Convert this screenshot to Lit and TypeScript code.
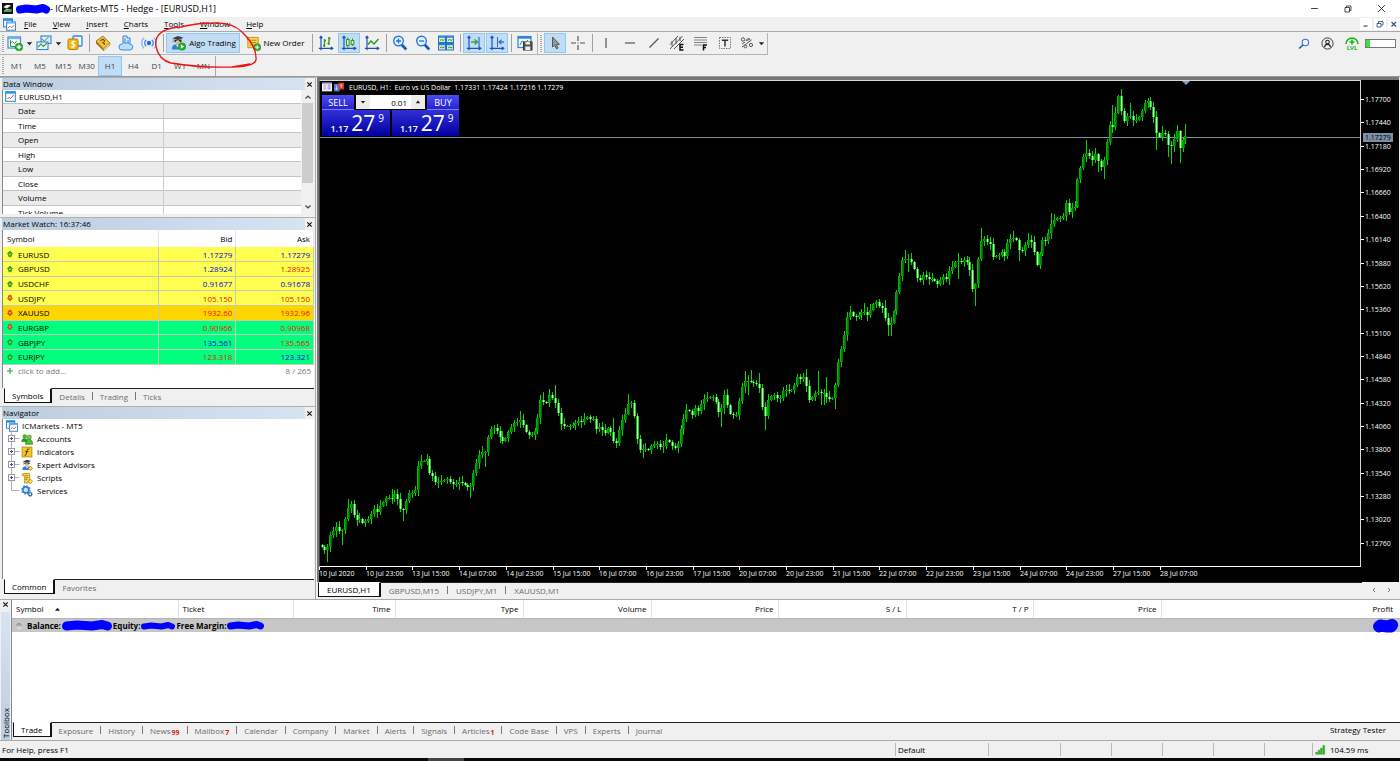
import { LitElement, html, svg, css } from "lit";
import { customElement, property, state } from "lit/decorators.js";
import { classMap } from "lit/directives/class-map.js";

/* ---------- icons ---------- */

const plusBadge = svg`<circle cx="12" cy="12" r="3.8" fill="#2fae2b" stroke="#0c7d12" stroke-width=".6"/><path d="M12 9.8v4.4M9.8 12h4.4" stroke="#fff" stroke-width="1.3"/>`;
const axes = svg`<path d="M3 1.5v11.8h11.5M1.6 3.2L3 1.2l1.4 2M12.8 11.9l2 1.4-2 1.4M.8 13.3H3v2" fill="none" stroke="#1c50c4" stroke-width="1.2"/>`;
const gradCap = svg`<path d="M2.5 3.2L8 1l5.500 1.800L8 5.200z" fill="#3a3f46"/><path d="M4.500 4.500v2.300q3.500 1.800 7 0V4.300L8 5.700z" fill="#23272d"/><circle cx="7.800" cy="7.600" r="2.200" fill="#e6b98a"/><path d="M1.800 14.600q0-5.200 4.600-5l3.800.2q3 .8 3 4.800z" fill="#2f7fd2"/><path d="M6 9.800l2 2.600 2-2.400" fill="#fff"/><path d="M3.200 3.600v4" stroke="#b8860b" stroke-width=".8"/>`;

const ICONS: Record<string, unknown> = {
  app: svg`<rect width="16" height="16" fill="#111"/><path d="M2 6Q8 0 13 4L7 8z" fill="#eee"/><path d="M2 13l5-4 3 2 4-3v5z" fill="#4da24a"/><path d="M3 12q3-4 9-2" stroke="#fff" fill="none"/>`,
  mdi: svg`<rect x=".7" y="1" width="11" height="10" fill="#fff" stroke="#1680dc" stroke-width="1.2"/><path d="M.5 2.4h11.5" stroke="#1680dc" stroke-width="2"/><rect x="4.5" y="5" width="11" height="10" fill="#fff" stroke="#1680dc" stroke-width="1.2"/><path d="M4.5 6h11" stroke="#5fb4f2" stroke-width="1.6"/><path d="M6 12.5l2.5-2.5 2 2 3-3" fill="none" stroke="#e2522c" stroke-width="1.2"/>`,
  chart: svg`<rect x="1" y="1" width="14" height="14" fill="#fff" stroke="#1680dc" stroke-width="1.4"/><path d="M1 2.4h14" stroke="#2b96ec" stroke-width="3"/><path d="M3.5 11.5L6 9l2 2 4.500-5" fill="none" stroke="#d8402a" stroke-width="1.4"/>`,
  newchart: svg`<rect x="1" y="2" width="12.500" height="11" fill="#fff" stroke="#3987cf" stroke-width="1.2"/><path d="M1 3.2h12.500" stroke="#6cb1ea" stroke-width="2"/><path d="M3.500 5v6.500h8M3.500 8l2-1.500 2 2L10 5.600" fill="none" stroke="#2f9e44" stroke-width="1"/>${plusBadge}`,
  profiles: svg`<rect x="5" y="1" width="10" height="7.500" fill="#d9ecfb" stroke="#2f86cf" stroke-width="1.1"/><path d="M5.500 4l3 2 4-4" stroke="#2f9e44" fill="none"/><rect x="1" y="7" width="11" height="7.500" fill="#eef7ff" stroke="#2f86cf" stroke-width="1.1"/><path d="M2 12l3-3 2.500 2.500L11 8" stroke="#2f9e44" stroke-width="1.200" fill="none"/>`,
  symbols: svg`<rect x="6" y="1" width="9" height="10" rx="1" fill="#eaf5ff" stroke="#2f86cf" stroke-width="1.3"/><rect x="1" y="4" width="10" height="10.500" rx="1.500" fill="#f2b81f" stroke="#b57d06"/><path d="M8 6.800Q6 5.600 5 7t1.300 2.200T7.600 11 4 11.800M6.200 5.400v8" fill="none" stroke="#fff7d0" stroke-width="1.100"/>`,
  book: svg`<path d="M1 6l7-5 7 7-6.500 6z" fill="#f0bf3c" stroke="#9a6b09" stroke-width=".8"/><path d="M1 6v2.500L8.500 16v-2z" fill="#a8730d"/><path d="M8.500 14v2L15 10V8z" fill="#fff3c8" stroke="#9a6b09" stroke-width=".6"/><path d="M5.500 6q2-2.500 3.500-1T8 7.500l2 2" fill="none" stroke="#7b4e00" stroke-width="1.200"/>`,
  cloud: svg`<path d="M5 1h4v2h3v7H5z" fill="#d6ebff" stroke="#2c82dd" stroke-width="1"/><path d="M7 3v6M10 5v4" stroke="#2c82dd"/><path d="M4 15a3 3 0 010-6q1.500-2.500 4-.8 2-1.200 3.500.8a3 3 0 01.5 6z" fill="#b9dcff" stroke="#3a8de0" stroke-width="1"/>`,
  radio: svg`<circle cx="8" cy="8" r="2.200" fill="#1f6fd6"/><path d="M5.200 4.700a4.500 4.500 0 000 6.600M10.800 4.700a4.500 4.500 0 010 6.600" fill="none" stroke="#3c86e0" stroke-width="1.300"/><path d="M3 2.600a7.500 7.500 0 000 10.800M13 2.600a7.500 7.500 0 010 10.800" fill="none" stroke="#7eb2ee" stroke-width="1.300"/>`,
  algo: svg`${gradCap}<circle cx="12" cy="11.500" r="4" fill="#27a527"/><path d="M10.800 9.300l3.400 2.200-3.400 2.200z" fill="#fff"/>`,
  order: svg`<path d="M2 1.500h11v11H2z" fill="#fbd75b" stroke="#c29312"/><path d="M2 1.500q-1.500 1 0 3M4 4.500h7M4 7h7M4 9.500h5" fill="none" stroke="#a97b07"/>${plusBadge}`,
  bars: svg`${axes}<path d="M6.500 4v8M5 10.500h1.500M6.500 5.500H8M11 2v8M9.500 8.500H11M11 3.500h1.600" stroke="#2c9a1e" stroke-width="1.400"/>`,
  candles: svg`${axes}<path d="M6.800 2.500v10M11.500 3.500v7.500" stroke="#2c9a1e"/><rect x="5.500" y="4.500" width="2.600" height="6" fill="#d9f5cc" stroke="#2c9a1e"/><rect x="10.200" y="5.500" width="2.600" height="4" fill="#d9f5cc" stroke="#2c9a1e"/>`,
  line: svg`${axes}<path d="M4 9.500l3-3.500 3 3 4.500-5" fill="none" stroke="#2c9a1e" stroke-width="1.400"/>`,
  zoomin: svg`<path d="M9.500 9.500l4.800 5" stroke="#1b57b8" stroke-width="2.600"/><circle cx="6.500" cy="6" r="4.800" fill="#e3f2ff" stroke="#2a7ad8" stroke-width="1.400"/><path d="M6.500 3.500v5M4 6h5" stroke="#2a6fd0" stroke-width="1.300"/>`,
  zoomout: svg`<path d="M9.500 9.500l4.800 5" stroke="#1b57b8" stroke-width="2.600"/><circle cx="6.500" cy="6" r="4.800" fill="#e3f2ff" stroke="#2a7ad8" stroke-width="1.400"/><path d="M4 6h5" stroke="#2a6fd0" stroke-width="1.300"/>`,
  tile: svg`<path d="M.5 1h7v6.500h-7zM8.500 1h7v6.500h-7zM.5 8.500h7V15h-7zM8.500 8.500h7V15h-7z" fill="#d8f0d0" stroke="#2a6fc8" stroke-width="1.100"/><path d="M.5 2h7M8.500 2h7M.5 9.500h7M8.500 9.500h7" stroke="#2a7fd8" stroke-width="1.500"/><path d="M2 5.500l1.500-1L5 5.500l1.500-1M10 5.500l1.500-1 1.500 1 1.500-1M2 13l1.500-1L5 13l1.500-1M10 13l1.500-1 1.500 1 1.500-1" fill="none" stroke="#2c8a1e"/>`,
  autoscroll: svg`${axes}<path d="M13 2v10" stroke="#1c50c4"/><path d="M5 7h6M8.500 4.500L11.500 7l-3 2.500" fill="none" stroke="#35a828" stroke-width="1.400"/>`,
  shift: svg`${axes}<path d="M8.500 2v10" stroke="#4a6a90"/><path d="M15 7h-4.500M12.500 4.800L10 7l2.500 2.200" fill="none" stroke="#2b78d8" stroke-width="1.300"/>`,
  template: svg`<rect x="1" y="1.500" width="13" height="11" fill="#e8f4ff" stroke="#2f86cf" stroke-width="1.200"/><path d="M1 2.700h13" stroke="#2f86cf" stroke-width="2"/><path d="M3 10l2-4 3 2 3-3" fill="none" stroke="#2f9e44"/><rect x="6.500" y="7" width="8.500" height="8" fill="#555" stroke="#333"/><path d="M8.500 7h4.500v2.500H8.500zM8.300 11.500h5V15h-5z" fill="#eee"/>`,
  cursor: svg`<path d="M5.500 2v10l2.300-2 1.600 3.800 1.600-.7-1.600-3.600 3-.2z" fill="#999" stroke="#555" stroke-width="1"/>`,
  cross: svg`<path d="M8 1v5M8 10v5M1 8h5M10 8h5M7.500 8h1" stroke="#555" stroke-width="1.200"/>`,
  vline: svg`<path d="M8 3v10" stroke="#555" stroke-width="1.200"/>`,
  hline: svg`<path d="M3 8h10" stroke="#555" stroke-width="1.200"/>`,
  tline: svg`<path d="M3.500 12.500l9-9" stroke="#555" stroke-width="1.200"/>`,
  channel: svg`<path d="M1 9.500L9 1M1 14L13.500 1M5 14L15 4M3 6v5M7 3v6M11 2v4" stroke="#555" fill="none"/><path d="M14.500 9.500H11V15h3.500M11 12.200h3" stroke="#111" stroke-width="1.500" fill="none"/>`,
  fibo: svg`<path d="M1 2.500h13M1 5h13M1 7.500h13M1 10h8" stroke="#777" stroke-width=".9"/><path d="M14 10h-3.500v5.500M10.500 12.500H13" stroke="#111" stroke-width="1.500" fill="none"/>`,
  text: svg`<rect x="2.500" y="2.500" width="11" height="11" fill="none" stroke="#777" stroke-dasharray="1.500 1"/><path d="M4.800 5.300h6.400M8 5v6.500" stroke="#333" stroke-width="1.500"/>`,
  objects: svg`<circle cx="4" cy="4.500" r="1.700" fill="none" stroke="#555"/><path d="M7 5.500l2.500-2.500 1.500 1.500zM3 12L12.500 5M3 9l3-2" fill="none" stroke="#555"/><circle cx="6.500" cy="11.500" r="1.400" fill="none" stroke="#555"/><circle cx="12" cy="10" r="1.600" fill="none" stroke="#555"/>`,
  find: svg`<path d="M7 9l-5.500 5" stroke="#2458c4" stroke-width="2.200"/><circle cx="9.800" cy="6" r="4.300" fill="#eef5ff" stroke="#3a72d8" stroke-width="1.400"/>`,
  user: svg`<circle cx="8" cy="8" r="6.900" fill="none" stroke="#333" stroke-width="1.200"/><circle cx="8" cy="6.200" r="2.200" fill="none" stroke="#222" stroke-width="1.300"/><path d="M4.500 12.500q0-3.500 3.500-3.500t3.500 3.500" fill="none" stroke="#222" stroke-width="1.400"/>`,
  accounts: svg`<circle cx="5" cy="4.500" r="3" fill="#46b52c"/><path d="M.5 12q0-5.500 4.500-5t4.500 5z" fill="#2f9a1d"/><circle cx="11" cy="5.500" r="2.700" fill="#8fce5a" stroke="#33641c" stroke-width=".8"/><path d="M6 15q0-6.500 4.800-6.500T15.500 15z" fill="#4cc42f" stroke="#1e6d10" stroke-width=".8"/>`,
  indicator: svg`<rect x="1.500" y="1.500" width="13" height="13" fill="#f8c91c" stroke="#b88908" stroke-width="1.200"/><path d="M11 4q-2.500-1-3 2l-1 5q-.5 2-2.200 1.300M5.500 7.500h4.500" fill="none" stroke="#333" stroke-width="1.200"/>`,
  expert: svg`${gradCap}<path d="M12.500 9.500l3 3-3 3-3-3z" fill="#ffd840" stroke="#a37a00" stroke-width=".9"/>`,
  script: svg`<path d="M2.500 2h9v10h2v2.500h-9V5H1.500z" fill="#f8d34a" stroke="#b08410"/><path d="M5.500 5h4.500M5.500 7.500h4.500M5.500 10h3" stroke="#a37a00"/><path d="M12.500 9.500l3 3-3 3-3-3z" fill="#ffe060" stroke="#a37a00" stroke-width=".9"/>`,
  gears: svg`<circle cx="6.500" cy="6.500" r="4" fill="#cfe4fb" stroke="#2f7bd6" stroke-width="2.200"/><circle cx="6.500" cy="6.500" r="5.600" fill="none" stroke="#2f7bd6" stroke-width="1.400" stroke-dasharray="2.200 2.200"/><circle cx="12.300" cy="12.300" r="2" fill="#fff" stroke="#1f64b8" stroke-width="1.400"/><circle cx="12.300" cy="12.300" r="3" fill="none" stroke="#1f64b8" stroke-width="1" stroke-dasharray="1.300 1.100"/>`,
  up: svg`<path d="M8 2l5.500 5.500H11v5L8 14l-3-1.500v-5H2.500z" fill="#35a71f" stroke="#1c7d10"/><circle cx="8" cy="8.500" r="1.500" fill="#d8f5a8"/>`,
  down: svg`<path d="M8 14l5.500-5.500H11v-5L8 2 5 3.500v5H2.500z" fill="#e8502c" stroke="#c03010"/><circle cx="8" cy="7.500" r="1.500" fill="#ffd6b0"/>`,
  plus: svg`<path d="M8 2v12M2 8h12" stroke="#2fae2b" stroke-width="2.400"/>`,
  depth: svg`<rect width="16" height="14" y="1" fill="#f3f3ff"/><path d="M0 2h16" stroke="#88a" stroke-width="1.500"/><path d="M2 5h5M2 8h5M2 11h5" stroke="#d88" stroke-width="1.500"/><path d="M9 5h5M9 8h5M9 11h5" stroke="#77d" stroke-width="1.500"/>`,
  trade: svg`<rect x="0" y="3" width="9" height="12" fill="#4f7fd8"/><rect x="7" y="1" width="9" height="11" fill="#d83a2c"/><path d="M4 6v6M2.500 10L4 12l1.500-2M11.500 10V4M10 6l1.500-2L13 6" stroke="#fff" fill="none"/>`,
  close: svg`<path d="M3 3l10 10M13 3L3 13" stroke="#111" stroke-width="2.600"/>`,
  winmin: svg`<path d="M2 8h12" stroke="#222" stroke-width="1.500"/>`,
  winmax: svg`<path d="M2 5h9v9H2zM5 5V2h9v9h-3" fill="none" stroke="#222" stroke-width="1.600"/>`,
  winclose: svg`<path d="M2 2l12 12M14 2L2 14" stroke="#222" stroke-width="1.600"/>`,
  submin: svg`<path d="M3 12h8" stroke="#3a5580" stroke-width="2.500"/>`,
  subclose: svg`<path d="M3 4l9 9M12 4l-9 9" stroke="#3a5580" stroke-width="2.600"/>`,
  submax: svg`<path d="M2 7h8v7H2zM5 7V3h9v7h-4" fill="none" stroke="#3a5580" stroke-width="1.800"/>`,
  chevup: svg`<path d="M3 11l5-5 5 5" fill="none" stroke="#444" stroke-width="2.400"/>`,
  chevdown: svg`<path d="M3 5l5 5 5-5" fill="none" stroke="#444" stroke-width="2.400"/>`,
  chevleft: svg`<path d="M10 4L6 8l4 4" fill="none" stroke="#777" stroke-width="2"/>`,
  chevright: svg`<path d="M6 4l4 4-4 4" fill="none" stroke="#777" stroke-width="2"/>`,
  caret: svg`<path d="M2 5h12l-6 7z" fill="#222"/>`,
  caretup: svg`<path d="M2 11h12L8 4z" fill="#222"/>`,
  signal: svg`<path d="M1 15v-3h2.500v3zM4.500 15v-6H7v6zM8 15V6h2.500v9zM11.500 15V2H14v13z" fill="#38b52c" stroke="#1f8a17" stroke-width=".6"/>`,
};

const icon = (name: string, size = 16) =>
  html`<svg class="icon" width=${size} height=${size} viewBox="0 0 16 16" aria-hidden="true">${ICONS[name]}</svg>`;

const shared = css`
  * { box-sizing: border-box; }
  button, input, select { font: inherit; color: inherit; margin: 0; padding: 0; border: 0; border-radius: 0; background: none; }
  table { border-collapse: collapse; border-spacing: 0; width: 100%; table-layout: fixed; }
  th { font-weight: normal; }
  th, td { padding: 0; text-align: left; }
  .icon { display: block; flex: none; }
`;

/* ---------- tab strip ---------- */

interface Tab { name: string; count?: string }

@customElement("tab-strip")
class TabStrip extends LitElement {
  @property({ attribute: false }) tabs: Tab[] = [];
  @state() private active = 0;

  static styles = [shared, css`
    :host { display: flex; align-items: flex-start; height: 15px; min-width: 0; }
    .tab { height: 15px; line-height: 13px; padding: 0 var(--tab-pad, 7px); color: #6b6b6b; border-top: 1px solid #222; white-space: nowrap; flex: none; display: flex; align-items: center; }
    .tab.on { color: #000; background: #fff; border: 1px solid #111; border-top-color: #fff; border-width: 1px 2px 1px 1px; }
    .sep { flex: none; width: 1px; height: 15px; border-top: 1px solid #222; background: linear-gradient(#777, #777) center 3px / 1px 8px no-repeat; }
    .count { color: #e01414; font-size: 7px; font-weight: bold; line-height: 8px; align-self: flex-end; padding-left: 1px; }
    .fill { flex: 1; border-top: 1px solid #222; height: 1px; }
  `];

  render() {
    return html`
      ${this.tabs.map((t, i) => html`
        ${i > 0 && i - 1 !== this.active && i !== this.active ? html`<span class="sep"></span>` : ""}
        <button class=${classMap({ tab: true, on: i === this.active })} @click=${() => (this.active = i)}>
          ${t.name}${t.count ? html`<span class="count">${t.count}</span>` : ""}
        </button>`)}
      <span class="fill"></span>`;
  }
}

/* ---------- price chart ---------- */

/* Close level of the series at chosen points: x, y on the plot. */
const PATH = `320.5,547 323,548 326,553 328.5,540 331,534 334,529 337,527 340,533 343,528 346,514 349,503 352,506 355,523 358,516 361,523 364,522 367,520
370,517 373,507 376,513 379,508 382,504 384,498 388,497 390,502 393,495 396,494 399,504 402,514 405,504 408,495 411,491 414,498 416.600,473 419,460 422,462
425,461 427,459 430,475 433,477 436,483 440,482 443,480 447,479 449,481 453,485 456,484 460,480 463,486 466,483 469,493 472,477 475,467 478,457 481,450 484,457
487,440 489,432 492,427 495,428 498,435 501,438 504,442 507,433 510,430 513,423 516,422 519,420 522,422 525,432 528,435 531,435 534,432 536.600,427 539,402 542,398
545,408 548,395 551,396 553,400 556,406 559,417 562,427 566,426 571,427 576,422 583,421 586,417 593,419 595,429 599,427 605,433 609,426 612,437 615,448 618,437
621,419 623,422 626,410 629,402 632,403 635,423 637.500,447 640,450 643,449 649,449 655,443 661,448 667,439 670,443 673,449 676,448 679,440 682,418 685,419
687,406 690,412 693,415 696,405 699,413 702,400 705,398 714,396 717,409 720,416 722.500,400 725,393 728.500,411 731,416 737,414 740,393 743,383 746,380 751,382
757,384 760,390 763.500,417 766,415 769,393 772,397 775,395 778,400 781,395 784,389 790,393 795,383 798,375 801,380 804,377 807,390 810,405 813,393 819,393 824,392
827,398 830,399 833,398 836.500,377 839,353 842,348 845,327 848,312 851,312 854,318 857,317 860,313 865,312 868,315 871,308 874,302 877,303 880,307 883,307 886,325
889,325 892,322 895,302 898,281 900.500,272 903,255 906,261 909,258 912,263 915,272 918,281 921,280 924,272 927,279 933,279 936,284 939,283 942,275 945,282 948,272
950.500,270 953,264 956,260 959,263 965,260 968,263 971,277 974,303 976.500,265 979,257 982,234 985,241 990,244 993,258 998,255 1002,252 1005,257 1008,240 1013,237
1016,240 1020,252 1023,251 1027,238 1031,243 1034,253 1037,267 1040,252 1043,237 1046,242 1049,230 1052,222 1058,216 1061,220 1063,215 1066,203 1069,213 1072,207
1075,207 1078,172 1081,168 1084,153 1087,152 1090,158 1093,160 1096,152 1099,166 1102,167 1104.500,157 1107,139 1110,123 1113,128 1116,109 1119,93 1122,117 1125,123
1128,113 1131,117 1134,122 1137,118 1140,118 1143,105 1146,101 1149,102 1152,112 1154.500,122 1157.500,140 1160,135 1163,132 1166,135 1169,152 1172,143 1175,135
1178,129 1180.500,158 1183.500,132 1186.500,138`
  .split(/\s+/).map((p) => p.split(",").map(Number));

/* Long wicks: x, reached level. */
const SPIKES = `328,562 343,545 349,499 393,489 402,521 427,454 469,498 484,467 519,411 542,392 548,389 556,385 612,418 629,394 643,458 720,427 746,371 751,370 748,395 760,373
766,430 778,402 807,369 819,371 822,405 824,405 827,377 836,409 865,303 889,336 886,300 892,336 906,250 909,272 959,253 959,279 974,306 982,228 1013,231 1020,261 1027,233
1052,213 1087,140 1099,172 1104,179 1113,105 1122,89 1131,103 1149,97 1157,150 1163,126 1169,157 1172,164 1180,163 1186,124 1186,144`
  .split(/\s+/).map((p) => p.split(",").map(Number));

const STEP = 46.7 / 16;
const X0 = 321.5;

interface Candle { x: number; open: number; close: number; high: number; low: number }

function buildCandles(): Candle[] {
  const out: Candle[] = [];
  let k = 0;
  let prev = 545;
  for (let i = 0; i < 297; i++) {
    const x = X0 + i * STEP;
    while (k < PATH.length - 2 && PATH[k + 1][0] < x) k++;
    const [xa, ya] = PATH[k];
    const [xb, yb] = PATH[k + 1];
    const t = Math.min(1, Math.max(0, (x - xa) / (xb - xa)));
    const close = Math.round(ya + (yb - ya) * t + (((i * 37) % 5) - 2) * 0.3);
    const top = Math.min(prev, close);
    const bottom = Math.max(prev, close);
    out.push({ x: Math.round(x), open: prev, close, high: Math.round(top - 1 - ((i * 29) % 7) * 0.8), low: Math.round(bottom + 1 + ((i * 53) % 7) * 0.8) });
    prev = close;
  }
  for (const [x, y] of SPIKES) {
    const c = out[Math.min(out.length - 1, Math.round((x - X0) / STEP))];
    c.high = Math.min(c.high, y);
    c.low = Math.max(c.low, y);
  }
  return out;
}

const CANDLES = buildCandles();
const PRICES = Array.from({ length: 20 }, (_, i) => (1.177 - i * 0.0026).toFixed(5));
const TIMES = ["10 Jul 2020", "10 Jul 23:00", "13 Jul 15:00", "14 Jul 07:00", "14 Jul 23:00", "15 Jul 15:00", "16 Jul 07:00", "16 Jul 23:00", "17 Jul 15:00",
  "20 Jul 07:00", "20 Jul 23:00", "21 Jul 15:00", "22 Jul 07:00", "22 Jul 23:00", "23 Jul 15:00", "24 Jul 07:00", "24 Jul 23:00", "27 Jul 15:00", "28 Jul 07:00"];

@customElement("price-chart")
class PriceChart extends LitElement {
  static styles = [shared, css`
    :host { display: grid; grid-template: minmax(0, 1fr) 15px / minmax(0, 1fr) 37px; background: #000; color: #fff; position: relative; overflow: hidden;
      border: 1px solid #777; border-width: 2px 0 0 2px; font: 7px/9px "Open Sans", sans-serif; padding-right: 1px; }
    .plot { border: 1px solid #d8d8d8; border-left-color: #444; border-bottom-color: #fff; position: relative; }
    .plot svg, .times svg { display: block; width: 100%; height: 100%; }
    .prices { display: flex; flex-direction: column; justify-content: space-between; padding: 15px 0 19px; position: relative; }
    .price { display: flex; align-items: center; gap: 1px; }
    .price::before { content: ""; width: 3px; height: 1px; background: #fff; }
    .now { position: absolute; left: 2px; top: 53px; right: 5px; background: #7a8ea6; color: #000; padding-left: 2px; line-height: 9px; }
    .times { grid-column: 1 / -1; }
    .head { position: absolute; left: 3px; top: 2px; display: flex; align-items: center; gap: 2px; height: 10px; white-space: pre; }
    .head span { margin-left: 3px; }
    .deal { position: absolute; left: 3px; top: 15px; width: 137px; display: grid; grid-template-columns: 32px 1fr 32px; background: #000; }
    .side { background: linear-gradient(#4c4cf4, #2323d2); height: 15px; font-size: 9px; line-height: 15px; border-bottom: 1px solid #7d7dff; color: #fff; }
    .volume { display: grid; grid-template-columns: 14px 1fr 14px; height: 14px; margin: 0 2px; background: #fff; color: #000; }
    .volume input { min-width: 0; width: 100%; height: 14px; text-align: right; font-size: 8px; padding-right: 4px; }
    .volume button { background: #ececec; display: grid; place-items: center; }
    .quotes { grid-column: 1 / -1; display: grid; grid-template-columns: 1fr 1fr; gap: 2px; }
    .quote { height: 26px; background: linear-gradient(#3030d8, #0000a0); color: #fff; display: flex; align-items: flex-end; justify-content: center; gap: 3px; padding-left: 3px; }
    .small { font-size: 9px; font-weight: 600; line-height: 15px; }
    .big { font-size: 21px; line-height: 25px; }
    .sup { font-size: 10px; line-height: 16px; align-self: flex-start; }
  `];

  private candle(c: Candle) {
    const up = c.close <= c.open;
    const top = Math.min(c.open, c.close);
    const h = Math.max(1, Math.abs(c.close - c.open));
    return svg`<rect x=${c.x} y=${c.high} width="1" height=${c.low - c.high} fill="#00d800"/>
      <rect x=${c.x - 1} y=${top} width="1" height=${h} fill="#00b400"/>
      <rect x=${c.x} y=${top} width="1" height=${h} fill=${up ? "#009000" : "#b4ffb4"}/>
      <rect x=${c.x + 1} y=${top} width="1" height=${h} fill=${up ? "#006c00" : "#3cb83c"}/>`;
  }

  render() {
    return html`
      <div class="plot">
        <svg role="img" aria-label="EURUSD H1 candles">
          <g transform="translate(-320 -81)">
            <rect x="320" y="137" width="100%" height="1" fill="#7f8fa0"/>
            <g shape-rendering="crispEdges">${CANDLES.map((c) => this.candle(c))}</g>
            <path d="M1182 81h8l-2 2-2 2-2-2z" fill="#8aa0b8"/>
          </g>
        </svg>
      </div>
      <div class="prices">
        ${PRICES.map((p) => html`<div class="price">${p}</div>`)}
        <div class="now">1.17279</div>
      </div>
      <div class="times">
        <svg>${TIMES.map((t, i) => svg`<rect x=${Math.round(i * 46.7)} y="0" width="1" height="3" fill="#fff"/>
          <text x=${Math.round(i * 46.7)} y="9" fill="#fff">${t}</text>`)}</svg>
      </div>
      <div class="head">${icon("depth", 10)}${icon("trade", 10)}<span>EURUSD, H1:  Euro vs US Dollar  1.17331 1.17424 1.17216 1.17279</span></div>
      <div class="deal">
        <button class="side">SELL</button>
        <div class="volume">
          <button aria-label="Less">${icon("caret", 6)}</button>
          <input aria-label="Volume" value="0.01">
          <button aria-label="More">${icon("caretup", 6)}</button>
        </div>
        <button class="side">BUY</button>
        <div class="quotes">
          ${[0, 1].map(() => html`<button class="quote"><span class="small">1.17</span><span class="big">27</span><span class="sup">9</span></button>`)}
        </div>
      </div>`;
  }
}

/* ---------- application ---------- */

const QUOTES = [
  { name: "EURUSD", dir: "up", bid: "1.17279", ask: "1.17279", b: "blue", a: "blue", bg: "yellow" },
  { name: "GBPUSD", dir: "up", bid: "1.28924", ask: "1.28925", b: "blue", a: "red", bg: "yellow" },
  { name: "USDCHF", dir: "up", bid: "0.91677", ask: "0.91678", b: "blue", a: "blue", bg: "yellow" },
  { name: "USDJPY", dir: "down", bid: "105.150", ask: "105.150", b: "red", a: "red", bg: "yellow" },
  { name: "XAUUSD", dir: "down", bid: "1932.60", ask: "1932.96", b: "red", a: "red", bg: "gold" },
  { name: "EURGBP", dir: "down", bid: "0.90966", ask: "0.90968", b: "red", a: "red", bg: "green" },
  { name: "GBPJPY", dir: "up", bid: "135.561", ask: "135.565", b: "blue", a: "red", bg: "green" },
  { name: "EURJPY", dir: "up", bid: "123.318", ask: "123.321", b: "red", a: "blue", bg: "green" },
];

const tabs = (...names: string[]): Tab[] => names.map((n) => { const [name, count] = n.split("#"); return { name, count }; });

@customElement("app-root")
class AppRoot extends LitElement {
  @state() private period = "H1";

  private marketTabs = tabs("Symbols", "Details", "Trading", "Ticks");
  private navTabs = tabs("Common", "Favorites");
  private chartTabs = tabs("EURUSD,H1", "GBPUSD,M15", "USDJPY,M1", "XAUUSD,M1");
  private toolTabs = tabs("Trade", "Exposure", "History", "News#99", "Mailbox#7", "Calendar", "Company", "Market", "Alerts", "Signals", "Articles#1", "Code Base", "VPS", "Experts", "Journal");

  static styles = [shared, css`
    :host { display: flex; flex-direction: column; height: 100vh; min-height: 560px; overflow: hidden; position: relative; background: #f0f0f0; color: #000; font: 8px/12px "Open Sans", sans-serif; }
    .title { display: flex; align-items: center; gap: 3px; height: 17px; padding: 0 14px 0 2px; background: #fff; font-size: 9px; }
    .title .name { margin-left: -3px; }
    .winbtns { margin-left: auto; display: flex; gap: 25px; align-items: center; }
    .scrawl { display: block; flex: none; overflow: visible; }
    .menu { display: flex; align-items: center; height: 15px; padding-left: 3px; gap: 8px; border-bottom: 1px solid #a8a8a8; }
    .menu nav { display: flex; gap: 16px; }
    .menu a { color: inherit; text-decoration: none; }
    .menu u { text-underline-offset: 1px; }
    .mdi { margin-left: auto; display: flex; gap: 2px; }
    .mdi button { width: 12px; height: 12px; background: #fff; display: grid; place-items: center; }
    .bar { display: flex; align-items: center; height: 23px; }
    .tools { display: flex; align-items: center; gap: 1px; height: 22px; padding: 0 1px 0 2px; border: 1px solid #b4b4b4; border-width: 0 1px 1px 0; }
    .grip { width: 2px; height: 17px; background: repeating-linear-gradient(#aaa 0 1px, transparent 1px 2px); margin-right: 1px; }
    .tools button { width: 22px; height: 20px; display: flex; align-items: center; justify-content: center; border: 1px solid transparent; flex: none; }
    .tools .on { background: #c0ddf5; border-color: #90c8f4; }
    .tools .drop { width: 28px; gap: 3px; }
    .tools .wide { width: auto; padding: 0 1px; gap: 3px; }
    .tools .algo { width: 74px; }
    .tools .order { width: 68px; }
    .sep { width: 1px; height: 18px; background: #a0a0a0; margin: 0 1px 0 2px; }
    .draw { display: flex; justify-content: space-between; width: 171px; }
    .right { margin-left: auto; display: flex; align-items: center; gap: 11px; padding-right: 4px; }
    .lvl { margin-right: -5px; }
    .meter { width: 31px; height: 9px; border: 1px solid #777; background: linear-gradient(90deg, #3be43b 4px, #fff 4px); }
    .periods { display: flex; align-items: center; height: 22px; padding-left: 2px; border-bottom: 1px solid #999; }
    .set { display: grid; grid-template-columns: repeat(9, 1fr); width: 211px; border-right: 1px solid #aaa; height: 20px; }
    .set button { color: #444; border: 1px solid transparent; }
    .set .on { background: #c0ddf5; border-color: #90c8f4; }
    .main { display: grid; grid-template-columns: 316px minmax(0, 1fr); gap: 1px; flex: 1; min-height: 0; padding-right: 1px; }
    .left { display: flex; flex-direction: column; min-height: 0; border-right: 1px solid #aaa; gap: 2px; }
    .panel { display: flex; flex-direction: column; min-height: 0; padding: 0 1px 0 2px; border-top: 1px solid #b0b0b0; }
    .cap { display: flex; align-items: center; justify-content: space-between; height: 12px; line-height: 12px; padding-left: 1px; flex: none; background: linear-gradient(90deg, #bccddf, #d7e4f2); }
    .cap button { width: 9px; height: 12px; background: #f0f0f0; display: grid; place-items: center; }
    .body { background: #fff; flex: 1; min-height: 0; overflow: hidden; border-left: 1px solid #888; }
    .datawin { height: 138px; flex: none; padding-bottom: 1px; }
    .data { display: flex; }
    .data .grid { flex: 1; min-width: 0; }
    .sym { display: flex; align-items: center; gap: 3px; height: 13px; padding-left: 2px; }
    .values { height: 116px; }
    .values td { border-top: 1px solid #c4c4c4; padding-left: 15px; line-height: 13px; }
    .values td + td { border-left: 1px solid #ccc; padding: 0; }
    .values .shade { background: #ebebeb; }
    .vname { width: 54%; }
    .scroll { width: 13px; background: #f0f0f0; display: flex; flex-direction: column; align-items: center; padding: 3px 1px; }
    .thumb { width: 11px; height: 80px; background: #cdcdcd; margin: 2px 0 auto; }
    .market { height: 187px; flex: none; padding-bottom: 1px; }
    .quotes th { height: 17px; padding-left: 4px; border-right: 1px solid #e4e4e4; }
    .quotes .num { text-align: right; padding-right: 3px; }
    .quotes td { height: 14px; line-height: 13px; }
    .quotes tbody { height: 117px; }
    .quotes tbody td { border: 1px solid #c8c8b4; border-width: 0 1px 1px 0; }
    .nm { display: flex; align-items: center; gap: 4px; padding-left: 3px; }
    .half { width: 50%; } .quarter { width: 25%; }
    .yellow { background: #ffff50; }
    .gold { background: #ffd500; }
    .green { background: #00ff7f; }
    .blue { color: #0000e6; }
    .red { color: #f01400; }
    .add { display: flex; align-items: center; justify-content: space-between; color: #777; padding-right: 3px; height: 13px; }
    .navi { flex: 1; padding-bottom: 5px; }
    .market tab-strip, .navi tab-strip { margin-left: 2px; }
    .tree { list-style: none; margin: 0; padding: 0 0 0 3px; }
    .tree li { display: flex; align-items: center; gap: 4px; height: 13px; }
    .twig { width: 14px; height: 13px; margin-right: -5px; }
    .leaf { padding-left: 2px; }
    .chartcol { display: flex; flex-direction: column; min-width: 0; min-height: 0; border-top: 1px solid #777; }
    price-chart { flex: 1; min-height: 0; }
    .charttabs { display: flex; padding: 0 6px 2px 1px; align-items: center; --tab-pad: 8px; }
    .charttabs tab-strip { flex: 1; }
    .arrows { display: flex; gap: 7px; padding-left: 8px; }
    .toolbox { display: grid; grid-template-columns: 11px minmax(0, 1fr); height: 142px; flex: none; border-top: 1px solid #aaa; border-bottom: 1px solid #aaa; }
    .spine { display: flex; flex-direction: column; align-items: center; justify-content: space-between; padding-top: 1px; }
    .spine div { flex: 1; margin-top: 4px; width: 9px; background: linear-gradient(#bccddf, #d7e4f2); writing-mode: vertical-rl; transform: rotate(180deg); line-height: 9px; padding-top: 2px; }
    .trade { display: flex; flex-direction: column; min-width: 0; background: #fff; border-left: 1px solid #888; }
    .trade th { height: 18px; border-right: 1px solid #e2e2e2; padding: 0 4px; }
    .trade th.r { text-align: right; }
    .trade th:last-child { border: 0; padding-right: 7px; }
    .trade th .icon { display: inline-block; margin-left: 8px; vertical-align: -1px; }
    .trade table { flex: none; }
    .wsym { width: 166px; } .wtick { width: 115px; } .wtime { width: 102px; } .wcol { width: 128px; } .wpr { width: 127px; }
    .sum { display: flex; align-items: center; height: 14px; background: #c6c6c6; border-top: 1px solid #b4b4b4; font-weight: bold; padding: 0 3px 0 4px; white-space: nowrap; gap: 1px; }
    .dot { width: 6px; height: 6px; border-radius: 3px; background: linear-gradient(#888, #eee); margin-right: 4px; }
    .sum .last { margin-left: auto; }
    .gap { flex: 1; }
    .foot { display: flex; background: #f0f0f0; padding: 0 0 3px 1px; }
    .foot tab-strip { flex: 1; }
    .tester { border-top: 1px solid #222; padding: 0 14px 0 7px; height: 15px; line-height: 13px; }
    .status { display: flex; align-items: center; height: 17px; flex: none; }
    .status div { border-right: 1px solid #b8b8b8; height: 13px; line-height: 13px; padding-left: 2px; display: flex; align-items: center; gap: 4px; }
    .help { flex: 1; }
    .s1 { width: 93px; } .s2 { width: 72px; } .s3 { width: 51px; } .s4 { width: 48px; }
    .status .ms { width: 87px; border: 0; }
    .edge { height: 3px; background: #08080e; flex: none; display: flex; }
    .edge i { margin-left: 428px; width: 36px; background: #444; }
    .ring { position: absolute; left: 150px; top: 18px; pointer-events: none; }
  `];

  private tool(name: string, label: string, cls = "") {
    return html`<button class=${cls} title=${label} aria-label=${label}>${icon(name, 16)}${cls.includes("drop") ? icon("caret", 7) : ""}</button>`;
  }

  private scrawl(w: number, h = 8) {
    const m = h / 2;
    return html`<svg class="scrawl" width=${w} height=${h}><path d="M${m} ${m + 0.5}L${w * 0.3} ${m - 0.5} ${w * 0.6} ${m + 0.5} ${w * 0.8} ${m - 1} ${w - m} ${m + 0.5}" fill="none" stroke="#0000ff" stroke-width=${h} stroke-linecap="round" stroke-linejoin="round"/></svg>`;
  }

  private caption(text: string) {
    return html`<div class="cap"><span>${text}</span><button aria-label="Close ${text}">${icon("close", 7)}</button></div>`;
  }

  private branch(iconName: string, label: string, last = false) {
    return html`<li class="leaf">
      <svg class="twig" viewBox="0 0 14 13" aria-hidden="true">
        <path d=${last ? "M3.5 0v6.500h8" : "M3.500 0v13M7 6.500h4.500"} fill="none" stroke="#b0b0b0"/>
        ${last ? "" : svg`<rect x=".5" y="3.500" width="6" height="6" fill="#fff" stroke="#999"/><path d="M2 6.500h3M3.500 5v3" stroke="#3a50a0"/>`}
      </svg>
      ${icon(iconName, 12)}<span>${label}</span></li>`;
  }

  render() {
    const menu = ["File", "View", "Insert", "Charts", "Tools", "Window", "Help"];
    return html`
      <header class="title">
        ${icon("app", 11)}${this.scrawl(34, 8)}
        <span class="name">- ICMarkets-MT5 - Hedge - [EURUSD,H1]</span>
        <div class="winbtns">
          <button aria-label="Minimize">${icon("winmin", 9)}</button>
          <button aria-label="Restore">${icon("winmax", 8)}</button>
          <button aria-label="Close">${icon("winclose", 9)}</button>
        </div>
      </header>
      <div class="menu">
        ${icon("mdi", 13)}
        <nav>${menu.map((m) => html`<a href="#"><u>${m[0]}</u>${m.slice(1)}</a>`)}</nav>
        <div class="mdi">
          <button aria-label="Minimize chart">${icon("submin", 8)}</button>
          <button aria-label="Restore chart">${icon("submax", 8)}</button>
          <button aria-label="Close chart">${icon("subclose", 8)}</button>
        </div>
      </div>
      <div class="bar">
        <div class="tools">
          <span class="grip"></span>
          ${this.tool("newchart", "New chart", "drop")}${this.tool("profiles", "Profiles", "drop")}${this.tool("symbols", "Symbols")}
          <span class="sep"></span>
          ${this.tool("book", "MetaEditor")}${this.tool("cloud", "Cloud")}${this.tool("radio", "Signals")}
          <span class="sep"></span>
          <button class="wide algo on">${icon("algo", 16)}Algo Trading</button>
          <button class="wide order">${icon("order", 15)}New Order</button>
          <span class="sep"></span>
          ${this.tool("bars", "Bar chart")}${this.tool("candles", "Candlesticks", "on")}${this.tool("line", "Line chart")}
          <span class="sep"></span>
          ${this.tool("zoomin", "Zoom in")}${this.tool("zoomout", "Zoom out")}${this.tool("tile", "Tile windows")}
          <span class="sep"></span>
          ${this.tool("autoscroll", "Auto scroll", "on")}${this.tool("shift", "Chart shift", "on")}
          <span class="sep"></span>
          ${this.tool("template", "Templates")}
        </div>
        <div class="tools">
          <span class="grip"></span>
          ${this.tool("cursor", "Cursor", "on")}${this.tool("cross", "Crosshair")}
          <span class="sep"></span>
          <div class="draw">
            ${this.tool("vline", "Vertical line")}${this.tool("hline", "Horizontal line")}${this.tool("tline", "Trendline")}
            ${this.tool("channel", "Channel")}${this.tool("fibo", "Fibonacci")}${this.tool("text", "Text")}${this.tool("objects", "Objects", "drop")}
          </div>
        </div>
        <div class="right">
          <button aria-label="Search">${icon("find", 12)}</button>
          <button aria-label="Account">${icon("user", 13)}</button>
          <div class="lvl">
            <svg class="icon" width="14" height="18" viewBox="0 0 14 18" role="img" aria-label="Level">
              <path d="M1 9a6 6 0 0112 0M7 4.500v5M4.500 7h5" fill="none" stroke="#19b519" stroke-width="1.600"/>
              <text x="7" y="15" text-anchor="middle" font-size="6" font-weight="bold" fill="#19b519">LVL</text>
            </svg>
          </div>
          <div class="meter"></div>
        </div>
      </div>
      <div class="periods">
        <span class="grip"></span>
        <div class="set">
          ${["M1", "M5", "M15", "M30", "H1", "H4", "D1", "W1", "MN"].map((p) => html`
            <button class=${classMap({ on: p === this.period })} @click=${() => (this.period = p)}>${p}</button>`)}
        </div>
      </div>
      <main class="main">
        <div class="left">
          <section class="panel datawin">
            ${this.caption("Data Window")}
            <div class="body data">
              <div class="grid">
                <div class="sym">${icon("chart", 11)}EURUSD,H1</div>
                <table class="values">
                  <colgroup><col class="vname"><col></colgroup>
                  ${["Date", "Time", "Open", "High", "Low", "Close", "Volume", "Tick Volume"].map((r, i) => html`<tr class=${classMap({ shade: i % 2 === 0 })}><td>${r}</td><td></td></tr>`)}
                </table>
              </div>
              <div class="scroll">${icon("chevup", 8)}<span class="thumb"></span>${icon("chevdown", 8)}</div>
            </div>
          </section>
          <section class="panel market">
            ${this.caption("Market Watch: 16:37:46")}
            <div class="body">
              <table class="quotes">
                <colgroup><col class="half"><col class="quarter"><col class="quarter"></colgroup>
                <thead><tr><th>Symbol</th><th class="num">Bid</th><th class="num">Ask</th></tr></thead>
                <tbody>
                  ${QUOTES.map((q) => html`<tr class=${q.bg}>
                    <td><div class="nm">${icon(q.dir, 8)}${q.name}</div></td>
                    <td class="num ${q.b}">${q.bid}</td><td class="num ${q.a}">${q.ask}</td></tr>`)}
                </tbody>
              </table>
              <div class="add"><span class="nm">${icon("plus", 8)}click to add...</span><span>8 / 265</span></div>
            </div>
            <tab-strip .tabs=${this.marketTabs}></tab-strip>
          </section>
          <section class="panel navi">
            ${this.caption("Navigator")}
            <div class="body">
              <ul class="tree">
                <li>${icon("mdi", 12)}<span>ICMarkets - MT5</span></li>
                ${this.branch("accounts", "Accounts")}${this.branch("indicator", "Indicators")}${this.branch("expert", "Expert Advisors")}
                ${this.branch("script", "Scripts")}${this.branch("gears", "Services", true)}
              </ul>
            </div>
            <tab-strip .tabs=${this.navTabs}></tab-strip>
          </section>
        </div>
        <section class="chartcol">
          <price-chart></price-chart>
          <div class="charttabs">
            <tab-strip .tabs=${this.chartTabs}></tab-strip>
            <div class="arrows"><button aria-label="Previous">${icon("chevleft", 8)}</button><button aria-label="Next">${icon("chevright", 8)}</button></div>
          </div>
        </section>
      </main>
      <section class="toolbox">
        <div class="spine"><button aria-label="Close Toolbox">${icon("close", 7)}</button><div>Toolbox</div></div>
        <div class="trade">
          <table>
            <colgroup><col class="wsym"><col class="wtick"><col class="wtime"><col class="wcol"><col class="wcol"><col class="wpr"><col class="wcol"><col class="wpr"><col class="wcol"><col></colgroup>
            <tr><th>Symbol ${icon("caretup", 7)}</th><th>Ticket</th>${["Time", "Type", "Volume", "Price", "S / L", "T / P", "Price", "Profit"].map((h) => html`<th class="r">${h}</th>`)}</tr>
          </table>
          <div class="sum"><span class="dot"></span>Balance: ${this.scrawl(50, 9)}Equity:${this.scrawl(34, 6)}Free Margin: ${this.scrawl(37, 7)}<span class="last">${this.scrawl(24, 12)}</span></div>
          <div class="gap"></div>
          <div class="foot"><tab-strip .tabs=${this.toolTabs}></tab-strip><span class="tester">Strategy Tester</span></div>
        </div>
      </section>
      <footer class="status">
        <div class="help">For Help, press F1</div>
        <div class="s1">Default</div><div class="s2"></div><div class="s3"></div><div class="s3"></div><div class="s3"></div><div class="s3"></div><div class="s4"></div>
        <div class="ms">${icon("signal", 11)}104.59 ms</div>
      </footer>
      <div class="edge"><i></i></div>
      <svg class="ring" width="112" height="56" aria-hidden="true">
        <path d="M28 10Q45 5 62 5Q82 4 92 14Q107 28 106 42Q104 49 82 49Q50 50 21 45Q9 42 6 29Q3 12 28 9M82 49L100 46" fill="none" stroke="#f01010" stroke-width="1.300" stroke-linecap="round"/>
      </svg>`;
  }
}
